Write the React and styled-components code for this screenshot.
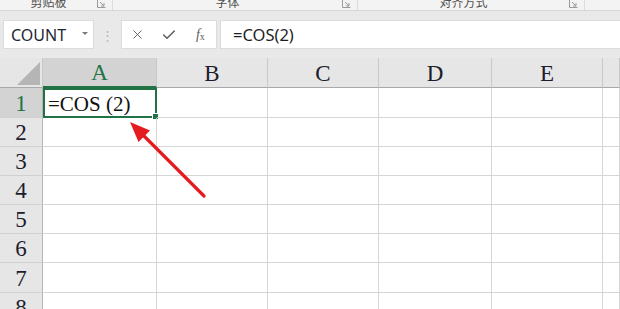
import React from 'react'
import styled, { createGlobalStyle } from 'styled-components'
import { X, Check } from 'lucide-react'

const GlobalStyle = createGlobalStyle`
  html, body {
    margin: 0;
    padding: 0;
    background: #ffffff;
    overflow: hidden;
  }
  body {
    width: 620px;
    height: 309px;
  }
`

const serif = `"Liberation Serif", "DejaVu Serif", "Times New Roman", serif`

const ribbonGroups = [
  { label: '剪贴板', width: 113 },
  { label: '字体', width: 245 },
  { label: '对齐方式', width: 227 },
  { label: '', width: 35, last: true },
]

const columns = ['A', 'B', 'C', 'D', 'E', '']
const rows = [1, 2, 3, 4, 5, 6, 7, 8]

function Launcher() {
  return (
    <LauncherIcon width="9" height="9" viewBox="0 0 9 9">
      <path d="M0.5 0.5 V8.5 H8.5" fill="none" stroke="#9a9a9a" strokeWidth="1" />
      <path d="M3 3 L7 7 M7 4 V7 H4" fill="none" stroke="#9a9a9a" strokeWidth="1" />
    </LauncherIcon>
  )
}

function App() {
  return (
    <Page>
      <GlobalStyle />
      {/* ribbon group labels, cut off at the top */}
      <Ribbon>
        {ribbonGroups.map((g, i) => (
          <RibbonGroup key={i} style={{ width: g.width }} $last={g.last}>
            <GroupLabel>{g.label}</GroupLabel>
            {!g.last && <Launcher />}
          </RibbonGroup>
        ))}
      </Ribbon>

      {/* formula bar */}
      <FormulaBar>
        <NameBox>
          <span>COUNT</span>
          <DropArrow />
        </NameBox>
        <Grip>⋮</Grip>
        <IconBox>
          <IconSlot><X size={15} strokeWidth={1.5} /></IconSlot>
          <IconSlot><Check size={16} strokeWidth={2.2} /></IconSlot>
          <IconSlot><Fx><i>f</i><sub>x</sub></Fx></IconSlot>
        </IconBox>
        <FormulaInput>=COS(2)</FormulaInput>
      </FormulaBar>

      {/* the sheet */}
      <Sheet>
        <Corner>
          <svg width="43" height="30" viewBox="0 0 43 30">
            <polygon points="40,4 40,27 17,27" fill="#b5b5b5" />
          </svg>
        </Corner>
        {columns.map((c, i) => (
          <ColHead key={c + i} $active={c === 'A'}>{c}</ColHead>
        ))}
        {rows.map((r) => (
          <React.Fragment key={r}>
            <RowHead $active={r === 1}>{r}</RowHead>
            {columns.map((c, i) => (
              <Cell key={c + i} $selected={r === 1 && c === 'A'}>
                {r === 1 && c === 'A' && (
                  <>
                    =COS (2)
                    <FillHandle />
                  </>
                )}
              </Cell>
            ))}
          </React.Fragment>
        ))}
      </Sheet>

      {/* red pointer arrow drawn over the sheet */}
      <ArrowLayer width="620" height="309" viewBox="0 0 620 309">
        <line x1="204" y1="196" x2="141" y2="133" stroke="#e41b1f" strokeWidth="3.2" strokeLinecap="round" />
        <polygon points="130,122 150,130.5 138.5,142" fill="#e41b1f" />
      </ArrowLayer>
    </Page>
  )
}

export default App

const Page = styled.div`
  position: relative;
  width: 620px;
  height: 309px;
  overflow: hidden;
  font-family: "Noto Sans", "Open Sans", sans-serif;
`

const Ribbon = styled.div`
  display: flex;
  height: 10px;
  background: #f3f3f3;
  border-bottom: 1px solid #d6d6d6;
  overflow: hidden;
`

const RibbonGroup = styled.div`
  display: flex;
  align-items: flex-start;
  flex-shrink: 0;
  padding-right: 6px;
  box-sizing: border-box;
  border-right: ${(p) => (p.$last ? 'none' : '1px solid #dcdcdc')};
`

const GroupLabel = styled.div`
  flex: 1;
  text-align: center;
  margin-top: -5px;
  font-family: "Noto Sans CJK SC", sans-serif;
  font-size: 12px;
  line-height: 14px;
  color: #505050;
`

const LauncherIcon = styled.svg`
  margin-top: -1px;
`

const FormulaBar = styled.div`
  display: flex;
  align-items: stretch;
  height: 47px;
  box-sizing: border-box;
  padding: 9px 0 9px 3px;
  background: #e9e9e9;
`

const NameBox = styled.div`
  display: flex;
  align-items: center;
  justify-content: space-between;
  width: 91px;
  box-sizing: border-box;
  padding: 0 5px 0 7px;
  background: #ffffff;
  border: 1px solid #dcdcdc;
  font-size: 16px;
  color: #1f2633;
`

const DropArrow = styled.span`
  width: 0;
  height: 0;
  border-left: 3px solid transparent;
  border-right: 3px solid transparent;
  border-top: 3px solid #7a7a7a;
  margin-bottom: 3px;
`

const Grip = styled.div`
  width: 27px;
  display: flex;
  align-items: center;
  justify-content: center;
  color: #b8b8b8;
  font-size: 13px;
`

const IconBox = styled.div`
  display: flex;
  width: 96px;
  box-sizing: border-box;
  background: #ffffff;
  border: 1px solid #dcdcdc;
`

const IconSlot = styled.div`
  width: 32px;
  display: flex;
  align-items: center;
  justify-content: center;
  color: #5c5c5c;
`

const Fx = styled.span`
  font-family: ${serif};
  font-size: 14px;
  color: #5c5c5c;
  sub {
    font-size: 10px;
    vertical-align: -1px;
  }
`

const FormulaInput = styled.div`
  flex: 1;
  margin-left: 3px;
  display: flex;
  align-items: center;
  padding-left: 12px;
  background: #ffffff;
  border: 1px solid #dcdcdc;
  border-right: none;
  font-size: 16.5px;
  color: #1f1f1f;
`

const Sheet = styled.div`
  display: grid;
  grid-template-columns: 43px 114px 111px 111px 113px 111px 1fr;
  grid-template-rows: 30px 30px 29px 29px 29px 29px 29px 30px 29px;
`

const Corner = styled.div`
  background: #e6e6e6;
  border-bottom: 1px solid #a8a8a8;
  border-right: 1px solid #c9c9c9;
  box-sizing: border-box;
  svg {
    display: block;
  }
`

const ColHead = styled.div`
  display: flex;
  align-items: center;
  justify-content: center;
  box-sizing: border-box;
  background: ${(p) => (p.$active ? '#d3d3d3' : '#e6e6e6')};
  border-right: 1px solid #c9c9c9;
  border-bottom: ${(p) => (p.$active ? '2px solid #217346' : '1px solid #a8a8a8')};
  color: ${(p) => (p.$active ? '#217346' : '#1c1c2c')};
  font-family: ${serif};
  font-size: 23px;
  padding-top: 2px;
`

const RowHead = styled.div`
  display: flex;
  align-items: center;
  justify-content: center;
  box-sizing: border-box;
  background: ${(p) => (p.$active ? '#d3d3d3' : '#e6e6e6')};
  border-right: 1px solid #b5b5b5;
  border-bottom: 1px solid #d0d0d0;
  color: ${(p) => (p.$active ? '#217346' : '#1c1c2c')};
  font-family: ${serif};
  font-size: 23px;
  padding-top: 2px;
`

const Cell = styled.div`
  position: relative;
  display: flex;
  align-items: center;
  box-sizing: border-box;
  border-right: 1px solid #d6d6d6;
  border-bottom: 1px solid #d6d6d6;
  padding-left: 4px;
  padding-top: 2px;
  font-family: ${serif};
  font-size: 21px;
  color: #111111;
  white-space: nowrap;
  ${(p) => p.$selected && `
    border: 2px solid #217346;
    padding-left: 3px;
  `}
`

const FillHandle = styled.span`
  position: absolute;
  right: -4px;
  bottom: -4px;
  width: 5px;
  height: 5px;
  background: #217346;
  border: 1px solid #ffffff;
`

const ArrowLayer = styled.svg`
  position: absolute;
  left: 0;
  top: 0;
  pointer-events: none;
`
